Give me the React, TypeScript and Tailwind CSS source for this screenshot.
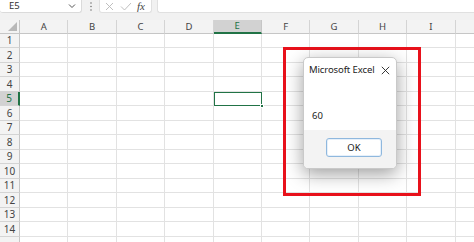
import React from "react";

const COLS = ["A", "B", "C", "D", "E", "F", "G", "H", "I", ""];
const ROWS = Array.from({ length: 15 }, (_, i) => i + 1);

export default function App() {
  return (
    <div className="relative w-[474px] h-[242px] overflow-hidden bg-white font-['Segoe_UI','Noto_Sans',sans-serif] text-[#333]">
      {/* formula bar band */}
      <div className="h-[20px] bg-[#f1f1f1] flex items-start">
        <div className="w-[82px] h-[13px] bg-white rounded-b-[3px] border-b border-r border-[#dadada] flex items-center justify-between pl-[9px] pr-[4px]">
          <span className="text-[9.5px] leading-none text-[#333]">E5</span>
          <svg width="8" height="6" viewBox="0 0 8 6" className="mr-[1px]">
            <path d="M1 1.5 L4 4.5 L7 1.5" fill="none" stroke="#555" strokeWidth="1" />
          </svg>
        </div>
        <div className="w-[17px] h-[13px] flex items-center justify-center">
          <svg width="2" height="9" viewBox="0 0 2 9">
            <circle cx="1" cy="1" r="0.8" fill="#777" />
            <circle cx="1" cy="4.5" r="0.8" fill="#777" />
            <circle cx="1" cy="8" r="0.8" fill="#777" />
          </svg>
        </div>
        <div className="w-[53px] h-[13px] bg-white rounded-b-[3px] border-b border-x border-[#e0e0e0] flex items-center pl-[5px]">
          <svg width="9" height="9" viewBox="0 0 9 9">
            <path d="M1 1 L8 8 M8 1 L1 8" stroke="#b8b8b8" strokeWidth="0.9" fill="none" />
          </svg>
          <svg width="12" height="9" viewBox="0 0 12 9" className="ml-[6px]">
            <path d="M1 4.5 L4.5 8 L11 1" stroke="#b8b8b8" strokeWidth="0.9" fill="none" />
          </svg>
          <span className="ml-[5px] font-['Liberation_Serif',serif] italic text-[11px] leading-none text-[#444]">fx</span>
        </div>
        <div className="ml-[5px] flex-1 h-[13px] bg-white rounded-bl-[3px] border-b border-l border-[#e0e0e0]" />
      </div>

      {/* grid */}
      <div className="grid grid-cols-[20px_repeat(10,48.4px)] grid-rows-[13.5px_repeat(15,14.5px)]">
        {/* corner */}
        <div className="relative bg-[#f3f3f3] border-r border-b border-[#c6c6c6]">
          <svg width="9" height="9" viewBox="0 0 9 9" className="absolute right-[2px] bottom-[2px]">
            <path d="M9 0 L9 9 L0 9 Z" fill="#b8b8b8" />
          </svg>
        </div>
        {COLS.map((c, i) =>
          c === "E" ? (
            <div
              key={i}
              className="bg-[#d2d2d2] border-r border-[#c6c6c6] border-b-2 border-b-[#217346] flex items-center justify-center text-[9.5px] leading-none text-[#217346]"
            >
              {c}
            </div>
          ) : (
            <div
              key={i}
              className="bg-[#f3f3f3] border-r border-b border-[#d4d4d4] border-b-[#c6c6c6] flex items-center justify-center text-[9.5px] leading-none text-[#444]"
            >
              {c}
            </div>
          )
        )}
        {ROWS.map((r) => (
          <React.Fragment key={r}>
            {r === 5 ? (
              <div className="bg-[#d2d2d2] border-r-2 border-r-[#217346] border-b border-b-[#d4d4d4] flex items-center justify-center text-[10px] leading-none text-[#217346]">
                {r}
              </div>
            ) : (
              <div className="bg-[#f3f3f3] border-r border-b border-[#d4d4d4] border-r-[#c6c6c6] flex items-center justify-center text-[10px] leading-none text-[#444]">
                {r < 15 ? r : ""}
              </div>
            )}
            {COLS.map((c, i) =>
              r === 5 && c === "E" ? (
                <div key={i} className="relative border-[1.5px] border-[#217346]">
                  <div className="absolute right-[-3px] bottom-[-3px] w-[4px] h-[4px] bg-[#217346] border border-white" />
                </div>
              ) : (
                <div key={i} className="border-r border-b border-[#e2e2e2]" />
              )
            )}
          </React.Fragment>
        ))}
      </div>

      {/* red highlight */}
      <div className="absolute left-[283px] top-[47px] w-[138px] h-[149px] border-[3px] border-[#e8111b]" />

      {/* message box */}
      <div className="absolute left-[303px] top-[57px] w-[94px] h-[112px] bg-white rounded-[5px] border border-[#c9c9c9] shadow-[0_5px_18px_rgba(0,0,0,0.38)] overflow-hidden flex flex-col">
        <div className="h-[23px] flex items-center justify-between pl-[5px] pr-[6px] pt-[1px]">
          <span className="text-[9.5px] leading-none text-[#222] tracking-[-0.1px]">Microsoft Excel</span>
          <svg width="9" height="9" viewBox="0 0 9 9">
            <path d="M0.8 0.8 L8.2 8.2 M8.2 0.8 L0.8 8.2" stroke="#222" strokeWidth="0.9" fill="none" />
          </svg>
        </div>
        <div className="flex-1 pl-[8px] pt-[20px]">
          <span className="text-[9.5px] leading-none text-[#222]">60</span>
        </div>
        <div className="h-[38px] bg-[#f3f3f3] flex justify-end pr-[14px] pt-[8px]">
          <div className="w-[56px] h-[19px] rounded-[3px] border border-[#8fb8de] bg-white shadow-[inset_0_0_0_1px_#e6f0fa] flex items-center justify-center text-[9.5px] leading-none text-[#222]">
            OK
          </div>
        </div>
      </div>
    </div>
  );
}
